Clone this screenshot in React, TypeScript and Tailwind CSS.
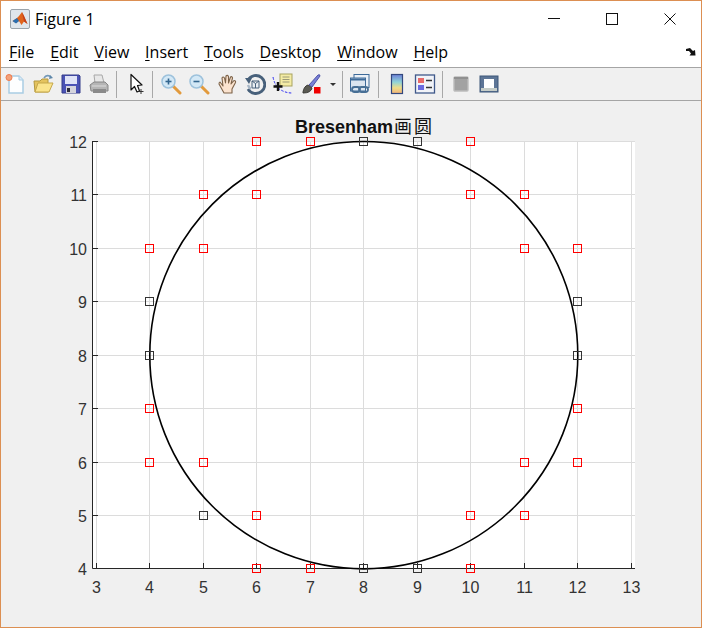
type Pt = [number, number];

const red: Pt[] = [
  [6, 12], [7, 12], [10, 12], [5, 11], [6, 11], [10, 11], [11, 11], [4, 10], [5, 10], [11, 10], [12, 10],
  [4, 7], [12, 7], [4, 6], [5, 6], [11, 6], [12, 6], [6, 5], [10, 5], [11, 5], [6, 4], [7, 4], [10, 4],
];
const black: Pt[] = [
  [8, 12], [9, 12], [4, 9], [12, 9], [4, 8], [12, 8], [5, 5], [8, 4], [9, 4],
];

// data to page pixels, snapped so 1px lines stay crisp
const px = (x: number) => Math.floor(96.3 + (x - 3) * 53.5) + 0.5;
const py = (y: number) => Math.floor(141.5 + (12 - y) * 53.42) + 0.5;

const xTicks = [3, 4, 5, 6, 7, 8, 9, 10, 11, 12, 13];
const yTicks = [4, 5, 6, 7, 8, 9, 10, 11, 12];

const menus = [
  { key: 'F', rest: 'ile' },
  { key: 'E', rest: 'dit' },
  { key: 'V', rest: 'iew' },
  { key: 'I', rest: 'nsert' },
  { key: 'T', rest: 'ools' },
  { key: 'D', rest: 'esktop' },
  { key: 'W', rest: 'indow' },
  { key: 'H', rest: 'elp' },
];

function Icon({ children }: { children: React.ReactNode }) {
  return (
    <div className="flex h-[30px] w-[28px] shrink-0 items-center justify-center">
      <svg width="22" height="22" viewBox="0 0 22 22">{children}</svg>
    </div>
  );
}

function Sep({ className }: { className: string }) {
  return <div className={`h-[27px] w-px shrink-0 bg-[#a8a8a8] ${className}`} />;
}

function Lens({ sign }: { sign: 'plus' | 'minus' }) {
  return (
    <Icon>
      <path d="M13 13 L20 20" stroke="#e29a3c" strokeWidth="3" strokeLinecap="round" />
      <circle cx="8.5" cy="8.5" r="6.5" fill="#d3e8f6" stroke="#9dc2dc" strokeWidth="1.5" />
      <path d="M5.5 8.5 H11.5" stroke="#33668f" strokeWidth="1.6" />
      {sign === 'plus' ? <path d="M8.5 5.5 V11.5" stroke="#33668f" strokeWidth="1.6" /> : null}
    </Icon>
  );
}

export default function App() {
  return (
    <div className="flex h-[628px] w-[702px] flex-col overflow-hidden border border-[#dc8f52] bg-[#f0f0f0] font-['Open_Sans','Noto_Sans',sans-serif] text-black">
      <div className="flex h-[36px] items-center bg-white">
        <svg className="ml-[9px]" width="20" height="20" viewBox="0 0 20 20">
          <rect x="0.5" y="0.5" width="19" height="19" rx="1.5" fill="#dfe6ec" stroke="#9aa3ab" />
          <path d="M2.5 12 L7 9 L9 7 L12 3 L14 7 L17.5 15 L14 12.5 L11.5 16 L9 12 L6 14 Z" fill="#e0641c" />
          <path d="M2.5 12 L7 9 L9 12 L6 14.5 Z" fill="#2a6fb0" />
          <path d="M12 3 L14 7 L17.5 15 L14 12.5 Z" fill="#c2401a" />
        </svg>
        <span className="ml-[5px] text-[16px]">Figure 1</span>
        <div className="ml-auto flex">
          <div className="flex w-[58px] justify-center">
            <svg width="12" height="12" viewBox="0 0 12 12"><path d="M0 5.5 H12" stroke="#111" /></svg>
          </div>
          <div className="flex w-[58px] justify-center">
            <svg width="12" height="12" viewBox="0 0 12 12"><rect x="0.5" y="0.5" width="11" height="11" fill="none" stroke="#111" /></svg>
          </div>
          <div className="flex w-[58px] justify-center">
            <svg width="12" height="12" viewBox="0 0 12 12"><path d="M0.5 0.5 L11.5 11.5 M11.5 0.5 L0.5 11.5" stroke="#111" /></svg>
          </div>
          <div className="w-[2px]" />
        </div>
      </div>

      <div className="flex h-[31px] items-center gap-[15.8px] border-b border-[#a5a5a5] bg-white pl-[8px] text-[16px]">
        {menus.map((m) => (
          <span key={m.key}>
            <span className="underline underline-offset-2">{m.key}</span>
            {m.rest}
          </span>
        ))}
        <svg className="mr-[5px] ml-auto" width="10" height="8" viewBox="0 0 10 8">
          <path d="M0 1 L4 0 L7 3 L9 2 L9.5 7.5 L3.5 7.5 L5 5.5 L3 3 L0 3 Z" fill="#111" />
        </svg>
      </div>

      <div className="flex h-[33px] items-center border-b border-[#a5a5a5] bg-[#f0f0f0]">
        <Icon>
          <path d="M5 3 H15 L19 7 V20 H5 Z" fill="#fdfeff" stroke="#a9cde4" strokeWidth="1.5" />
          <path d="M15 3 V7 H19" fill="#dbeaf5" stroke="#a9cde4" />
          <circle cx="5" cy="4.5" r="3" fill="#f2a27a" stroke="#ee7a4c" />
        </Icon>
        <Icon>
          <path d="M12 5 C14 2 17 2 19 4" fill="none" stroke="#7398b8" strokeWidth="1.6" />
          <path d="M18 2 L21 5 L17 6 Z" fill="#5f87aa" />
          <path d="M2 8 H8 L10 6 H16 V19 H3 Z" fill="#e4c35e" stroke="#b3983e" />
          <path d="M3 19 L6 10 H21 L17 19 Z" fill="#fae48c" stroke="#c5a74a" />
        </Icon>
        <Icon>
          <path d="M2 2 H19 L20 3 V20 H2 Z" fill="#4a52b5" stroke="#353c8a" />
          <rect x="5" y="3" width="12" height="8" fill="#dfe3f7" />
          <rect x="6" y="13" width="10" height="7" fill="#d4d4dd" />
          <rect x="7" y="15" width="3" height="4" fill="#2c2c3c" />
        </Icon>
        <Icon>
          <path d="M6 2 H14 L16 10 H7 Z" fill="#e8e8e8" stroke="#a8a8a8" />
          <path d="M2 12 L6 9 H17 L20 12 V18 H3 Z" fill="#b5b5b5" stroke="#868686" />
          <rect x="5" y="16" width="13" height="4" fill="#8a8a8a" />
          <path d="M4 13 H18" stroke="#dcdcdc" />
        </Icon>
        <Sep className="ml-[3px]" />
        <div className="ml-[6px]">
          <Icon>
            <path d="M5 1.5 V17 L8.5 13.5 L11 19 L13.5 18 L11.5 12.5 L16 12 Z" fill="#fff" stroke="#111" strokeWidth="1.2" strokeLinejoin="round" />
            <path d="M15 16 V21 M12.5 18.5 H17.5" stroke="#333" strokeWidth="1" />
          </Icon>
        </div>
        <Sep className="ml-px" />
        <div className="ml-[4px]">
          <Lens sign="plus" />
        </div>
        <Lens sign="minus" />
        <Icon>
          <path
            d="M4 9 L7 13 L6 5 Q7 3 8.5 5 L9.5 10 L10 3 Q11.5 1.5 12.5 3.5 L12.5 10 L14.5 4 Q16 3 16.5 5 L15 11 L18 7.5 Q20 7.5 19.5 9.5 L16 16 V20 H8 L3 11 Q3 9 4 9 Z"
            fill="#fbe3cf"
            stroke="#7c6248"
            strokeWidth="1.1"
            strokeLinejoin="round"
          />
        </Icon>
        <Icon>
          <path d="M4 7 A9 9 0 1 1 4 16" fill="none" stroke="#47607a" strokeWidth="2.8" />
          <path d="M1 5 L8 5 L5 11 Z" fill="#47607a" />
          <path d="M7 16 A8 8 0 0 1 4 12" fill="none" stroke="#a8b7c6" strokeWidth="2.4" />
          <path d="M8 8 H15 V15 H8 Z M8 8 L11.5 10.5 L15 8 M11.5 10.5 V15" fill="#e9eef3" stroke="#47607a" />
        </Icon>
        <Icon>
          <rect x="8" y="1" width="12" height="12" fill="#f4eca5" stroke="#a8a360" />
          <path d="M10.5 4 H17.5 M10.5 6.5 H17.5 M10.5 9 H17.5" stroke="#9c9a78" />
          <path d="M1 4 Q3 14 9 17 Q14 20 20 20" fill="none" stroke="#2c2cf0" strokeDasharray="2.5 1.5" />
          <path d="M6 9 V18 M1.5 13.5 H10.5" stroke="#111" strokeWidth="2.4" />
        </Icon>
        <Icon>
          <path d="M9 12 L18 2 Q20 1 20 3 L12 14 Z" fill="#7a80d6" stroke="#4c52a8" />
          <path d="M3 19 Q4 13 8 12 L12 15 Q11 20 3 20 Z" fill="#5a5a52" stroke="#3c3c38" />
          <rect x="14" y="14" width="6.5" height="6.5" fill="#f00000" />
        </Icon>
        <div className="flex h-[30px] w-[13px] items-center justify-end pr-[2px]">
          <div className="h-0 w-0 border-x-[3px] border-t-[3px] border-x-transparent border-t-[#333]" />
        </div>
        <Sep className="ml-[4px]" />
        <div className="ml-[3px]">
          <Icon>
            <rect x="5" y="1.5" width="15" height="13" fill="#eaf0f7" stroke="#3d6a99" />
            <rect x="1.5" y="5" width="15" height="13" fill="#dbe5f0" stroke="#3d6a99" />
            <path d="M1.5 6.5 H16.5" stroke="#3d6a99" strokeWidth="2" />
            <rect x="3" y="14" width="8" height="5" rx="2.5" fill="none" stroke="#476f95" strokeWidth="1.8" />
            <rect x="10" y="14" width="9" height="5" rx="2.5" fill="none" stroke="#476f95" strokeWidth="1.8" />
          </Icon>
        </div>
        <Sep className="ml-[4px]" />
        <div className="ml-[4px]">
          <Icon>
            <defs>
              <linearGradient id="cbar" x1="0" y1="0" x2="0" y2="1">
                <stop offset="0" stopColor="#6d7fd8" />
                <stop offset="0.4" stopColor="#8fd4d8" />
                <stop offset="0.7" stopColor="#eedd88" />
                <stop offset="1" stopColor="#f0b27a" />
              </linearGradient>
            </defs>
            <rect x="5.5" y="1.5" width="11" height="19" fill="url(#cbar)" stroke="#33487e" strokeWidth="1.2" />
          </Icon>
        </div>
        <Icon>
          <rect x="1.5" y="2" width="19" height="18" fill="#f1f3f8" stroke="#40598a" strokeWidth="1.3" />
          <rect x="4" y="5" width="6" height="5" fill="#e86a6a" />
          <rect x="4" y="12" width="6" height="5" fill="#6a6ae0" />
          <path d="M12 7.5 H18 M12 14.5 H18" stroke="#333" strokeWidth="1.4" />
        </Icon>
        <Sep className="ml-[3px]" />
        <div className="ml-[4px]">
          <Icon>
            <rect x="4" y="4" width="14" height="14" rx="1" fill="#a2a2a2" stroke="#bcbcbc" strokeWidth="1.4" />
            <path d="M4 5 H18" stroke="#909090" strokeWidth="2" />
          </Icon>
        </div>
        <Icon>
          <rect x="2" y="3" width="18" height="16" fill="#5d7596" stroke="#3d5678" />
          <rect x="6" y="6" width="10" height="9" fill="#fff" />
          <rect x="3" y="15" width="16" height="3" fill="#c6cdc8" />
        </Icon>
      </div>

      <svg className="block" width="700" height="526" viewBox="1 101 700 526">
        <rect x="93" y="141" width="542" height="428" fill="#fff" />
        {xTicks.map((x) => (
          <line key={x} x1={px(x)} x2={px(x)} y1="141" y2="568" stroke="#dcdcdc" />
        ))}
        {yTicks.slice(1).map((y) => (
          <line key={y} x1="93" x2="635" y1={py(y)} y2={py(y)} stroke="#dcdcdc" />
        ))}
        <path d="M92.5 141 V568.5 H635" fill="none" stroke="#262626" />
        {xTicks.map((x) => (
          <line key={x} x1={px(x)} x2={px(x)} y1="563" y2="568" stroke="#262626" />
        ))}
        {yTicks.map((y) => (
          <line key={y} x1="93" x2="98" y1={py(y)} y2={py(y)} stroke="#262626" />
        ))}
        <ellipse cx={96.3 + 5 * 53.5} cy={141.5 + 4 * 53.42} rx={53.5 * 4} ry={53.42 * 4} fill="none" stroke="#000" strokeWidth="1.6" />
        {red.map(([x, y]) => (
          <rect key={`r${x}-${y}`} x={px(x) - 4} y={py(y) - 4} width="8" height="8" fill="none" stroke="#f00" />
        ))}
        {black.map(([x, y]) => (
          <rect key={`b${x}-${y}`} x={px(x) - 4} y={py(y) - 4} width="8" height="8" fill="none" stroke="#333" />
        ))}
        <g className="font-['Liberation_Sans',sans-serif] text-[16px]" fill="#333">
          {xTicks.map((x) => (
            <text key={x} x={px(x)} y="593" textAnchor="middle">{x}</text>
          ))}
          {yTicks.map((y) => (
            <text key={y} x="87" y={py(y) + 6} textAnchor="end">{y}</text>
          ))}
        </g>
        <text x="295" y="133" fill="#111" className="font-['Liberation_Sans','Noto_Sans_CJK_SC',sans-serif] text-[18px] font-bold">
          Bresenham
          <tspan className="font-normal" dx="1">画</tspan>
          <tspan className="font-normal" dx="2">圆</tspan>
        </text>
      </svg>
    </div>
  );
}
